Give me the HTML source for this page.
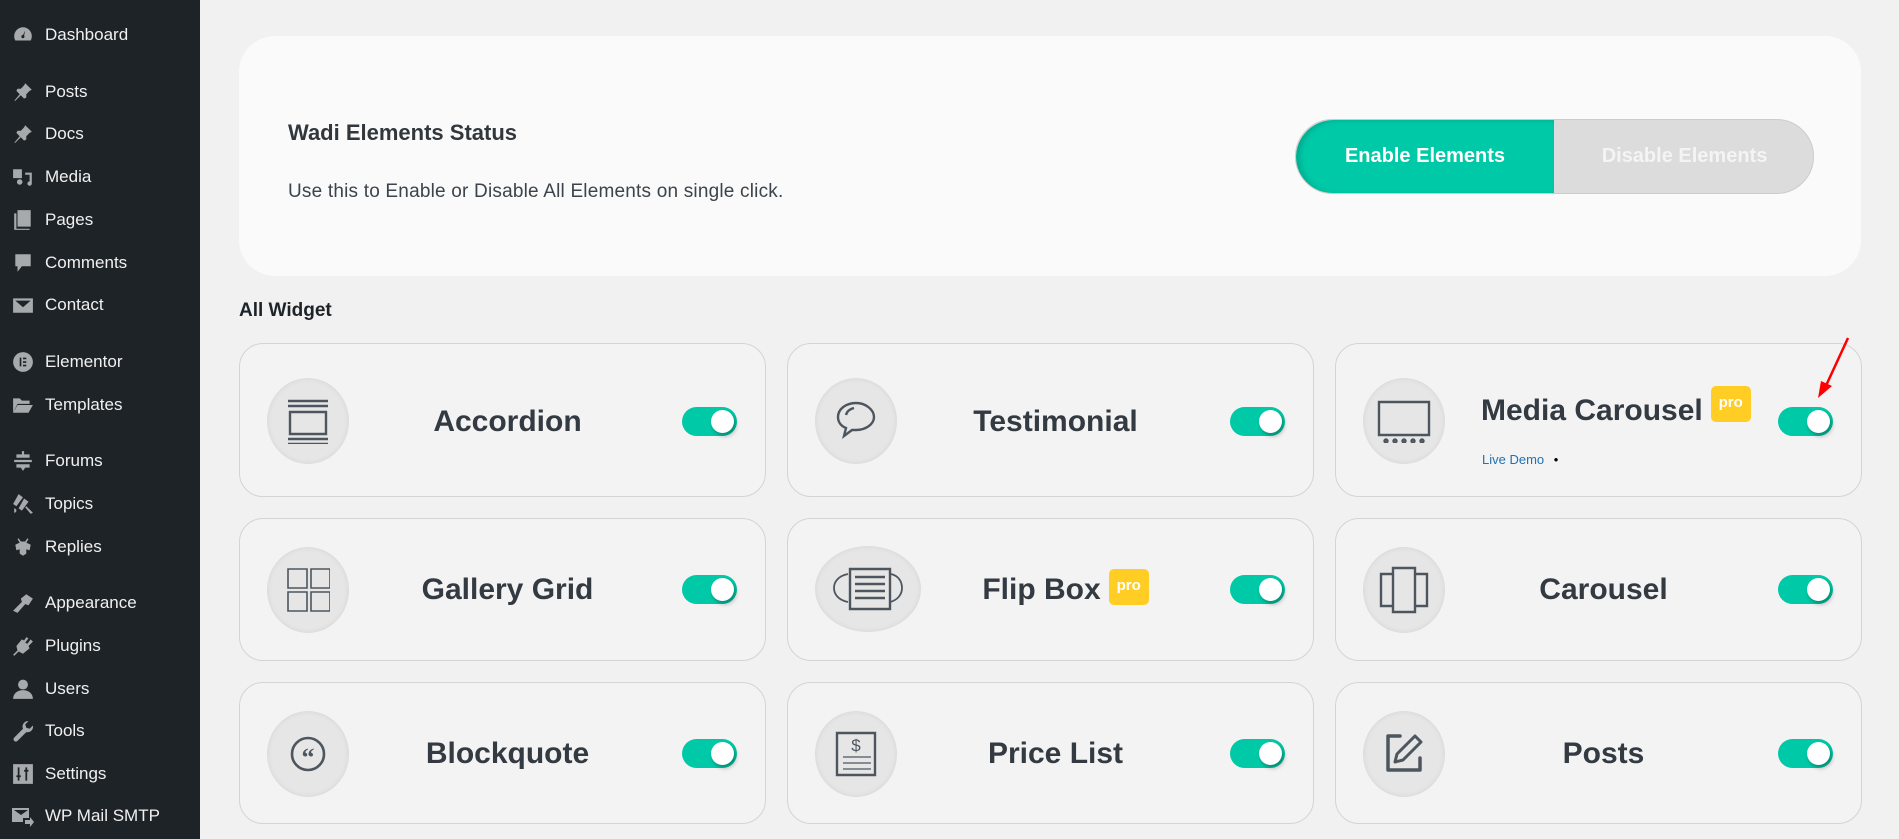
<!DOCTYPE html>
<html><head><meta charset="utf-8"><style>
*{margin:0;padding:0;box-sizing:border-box}
body{width:1899px;height:839px;overflow:hidden;background:#f1f1f1;font-family:"Liberation Sans","DejaVu Sans",sans-serif;position:relative}
#sb{position:absolute;left:0;top:0;width:200px;height:839px;background:#1d2327}
.mi{position:absolute;left:0;height:30px;width:200px;color:#f0f0f1;font-size:17px;line-height:30px}
.mi span{position:absolute;left:45px;top:0}
.mi svg{position:absolute;left:12px;top:4px;width:22px;height:22px;fill:#a7aaad}
#top{position:absolute;left:239px;top:36px;width:1622px;height:240px;background:#fafafa;border-radius:36px}
#top h2{position:absolute;left:49px;top:84px;font-size:22px;font-weight:600;color:#32373c}
#top p{position:absolute;left:49px;top:145px;font-size:19px;color:#3c434a;letter-spacing:.2px}
#btn{position:absolute;left:1295px;top:119px;width:519px;height:75px;border-radius:38px;overflow:hidden;background:#dcdcdc;border:1px solid #ccc}
#btn .en{position:absolute;left:0;top:0;width:258px;height:75px;background:#00c9a7;color:#fff;font-size:20px;font-weight:bold;text-align:center;line-height:73px;border-radius:38px 0 0 38px;box-shadow:inset 4px 0 6px rgba(0,0,0,.15)}
#btn .dis{position:absolute;left:258px;top:0;width:261px;height:75px;color:#f4f4f4;font-size:20px;font-weight:bold;text-align:center;line-height:73px}
#aw{position:absolute;left:239px;top:300px;font-size:19px;font-weight:600;color:#1d2327}
.card{position:absolute;width:527px;background:#f3f3f3;border:1px solid #d4d4d4;border-radius:24px}
.ic{position:absolute;left:27px;width:82px;height:86px;border-radius:50%;background:#e6e6e6;box-shadow:inset 0 0 6px rgba(0,0,0,.08)}
.ic svg{position:absolute;left:50%;top:50%;transform:translate(-50%,-50%);fill:none;stroke:#4d565f;stroke-width:2.4}
.tt{position:absolute;left:110px;right:100px;text-align:center;font-size:30px;font-weight:600;color:#333a42}
.tg{position:absolute;right:28px;width:55px;height:29px;border-radius:15px;background:#00c9a7}
.tg::after{content:"";position:absolute;right:3px;top:3px;width:23px;height:23px;border-radius:50%;background:#fff;box-shadow:2px 3px 4px rgba(0,0,0,.3)}
.pro{display:inline-block;background:#ffcd24;color:#fff;font-size:15px;font-weight:bold;border-radius:5px;width:40px;height:36px;line-height:34px;text-align:center;vertical-align:middle;margin-left:8px;position:relative;top:-4px}
</style></head><body>
<div id="sb">
<div class="mi" style="top:20px"><svg viewBox="0 0 20 20"><path d="M10 3a8 8 0 0 0-8 8c0 1.5.4 2.8 1 4h14c.6-1.2 1-2.5 1-4a8 8 0 0 0-8-8zm0 10a1.5 1.5 0 1 1 0-3l2-4-1 4.5A1.5 1.5 0 0 1 10 13z"/></svg><span>Dashboard</span></div>
<div class="mi" style="top:77px"><svg viewBox="0 0 20 20"><path d="M12 2l6 6-2 1-3 3 0 3-2 1-3-3-5 5-1 0 5-6-3-3 1-2 3 0 3-3z"/></svg><span>Posts</span></div>
<div class="mi" style="top:119px"><svg viewBox="0 0 20 20"><path d="M12 2l6 6-2 1-3 3 0 3-2 1-3-3-5 5-1 0 5-6-3-3 1-2 3 0 3-3z"/></svg><span>Docs</span></div>
<div class="mi" style="top:162px"><svg viewBox="0 0 20 20"><path d="M1 3h8v8H1zM12 6h6v10a2 2 0 1 1-2-2V8h-4zM7 12a2.5 2.5 0 1 1 0 5a2.5 2.5 0 0 1 0-5z"/></svg><span>Media</span></div>
<div class="mi" style="top:205px"><svg viewBox="0 0 20 20"><path d="M5 1h12v15H5zM2 4h2v14h12v1H2z"/></svg><span>Pages</span></div>
<div class="mi" style="top:248px"><svg viewBox="0 0 20 20"><path d="M3 2h14v11h-8l-4 5v-5H3z"/></svg><span>Comments</span></div>
<div class="mi" style="top:290px"><svg viewBox="0 0 20 20"><path d="M1 4h18v13H1zM3 6l7 6 7-6"/></svg><span>Contact</span></div>
<div class="mi" style="top:347px"><svg viewBox="0 0 20 20"><circle cx="10" cy="10" r="9"/><path d="M7 6h1.5v8H7zM10 6h3v1.5h-3zM10 9.3h3v1.5h-3zM10 12.5h3V14h-3z" fill="#1d2327"/></svg><span>Elementor</span></div>
<div class="mi" style="top:390px"><svg viewBox="0 0 20 20"><path d="M1 4h6l2 2h7v3H5l-4 8zM5 10h14l-4 7H1z"/></svg><span>Templates</span></div>
<div class="mi" style="top:446px"><svg viewBox="0 0 20 20"><path d="M9 1h2v3h5v3H4V4h5zM2 9h16v2H2zM4 13h12v3h-4l-2 3-2-3H4z"/></svg><span>Forums</span></div>
<div class="mi" style="top:489px"><svg viewBox="0 0 20 20"><path d="M6 1l4 3-6 8-3-2zM11 5l4 3-6 8-3-2zM13 12l6 6-2 1-5-6zM2 14a2 2 0 1 1 0 4z"/></svg><span>Topics</span></div>
<div class="mi" style="top:532px"><svg viewBox="0 0 20 20"><path d="M6 2l2 3h4l2-3 1 1-2 3 4 2-1 5-3-1v4l-3 2-3-2v-4l-3 1-1-5 4-2-2-3z"/></svg><span>Replies</span></div>
<div class="mi" style="top:588px"><svg viewBox="0 0 20 20"><path d="M13 2l6 4-4 6-3-1-7 8-4-2 8-8-1-3z"/></svg><span>Appearance</span></div>
<div class="mi" style="top:631px"><svg viewBox="0 0 20 20"><path d="M13 2l2 1-3 4 2 1 3-4 2 2-4 4 1 2-6 5-4-2-4 4-1-1 4-4-1-4 5-6 2 1z"/></svg><span>Plugins</span></div>
<div class="mi" style="top:674px"><svg viewBox="0 0 20 20"><circle cx="10" cy="6" r="4.5"/><path d="M1 19c0-5 4-8 9-8s9 3 9 8z"/></svg><span>Users</span></div>
<div class="mi" style="top:716px"><svg viewBox="0 0 20 20"><path d="M14 1a5 5 0 0 0-4 7L2 16a2 2 0 0 0 3 3l8-8a5 5 0 0 0 6-6l-3 3-3-1-1-3 3-3z"/></svg><span>Tools</span></div>
<div class="mi" style="top:759px"><svg viewBox="0 0 20 20"><path d="M1 1h18v18H1z"/><path d="M6 4v12M13 4v12M4 12h4M11 7h4" stroke="#1d2327" stroke-width="1.6"/></svg><span>Settings</span></div>
<div class="mi" style="top:801px"><svg viewBox="0 0 22 20"><path d="M0 2h17v10H11v4H0zM2 4l7 5 7-5"/><path d="M13 14h5v-3l4 5-4 5v-3h-5z"/></svg><span>WP Mail SMTP</span></div>
</div>

<div id="top"><h2>Wadi Elements Status</h2><p>Use this to Enable or Disable All Elements on single click.</p></div>
<div id="btn"><div class="en">Enable Elements</div><div class="dis">Disable Elements</div></div>
<div id="aw">All Widget</div>

<div class="card" style="left:239px;top:343px;height:154px">
<div class="ic" style="top:34px"><svg width="44" height="46" viewBox="0 0 44 46"><path d="M2 3h40M2 8h40M4 14h36v22H4zM2 41h40M2 46h40" /></svg></div>
<div class="tt" style="top:61px">Accordion</div><div class="tg" style="top:63px"></div></div>
<div class="card" style="left:787px;top:343px;height:154px">
<div class="ic" style="top:34px"><svg width="44" height="44" viewBox="0 0 44 44"><path d="M22 4C12 4 4 10 4 18c0 5 3 9 8 11l-2 8 8-6h4c10 0 18-6 18-13S32 4 22 4zM12 16c1-4 4-6 8-7"/></svg></div>
<div class="tt" style="top:61px">Testimonial</div><div class="tg" style="top:63px"></div></div>
<div class="card" style="left:1335px;top:343px;height:154px">
<div class="ic" style="top:34px"><svg width="56" height="44" viewBox="0 0 56 44"><path d="M3 3h50v33H3z"/><circle cx="10" cy="42" r="1.5"/><circle cx="19" cy="42" r="1.5"/><circle cx="28" cy="42" r="1.5"/><circle cx="37" cy="42" r="1.5"/><circle cx="46" cy="42" r="1.5"/></svg></div>
<div style="position:absolute;left:145px;top:50px;font-size:30px;font-weight:600;color:#333a42;white-space:nowrap">Media Carousel<span class="pro" style="top:-8px">pro</span></div>
<div style="position:absolute;left:146px;top:108px;font-size:13px;color:#2271b1">Live Demo <span style="color:#000;margin-left:6px">•</span></div>
<div class="tg" style="top:63px"></div></div>

<div class="card" style="left:239px;top:518px;height:143px">
<div class="ic" style="top:28px"><svg width="44" height="46" viewBox="0 0 44 46"><path d="M2 2h19v19H2zM25 2h19v19H25zM2 25h19v19H2zM25 25h19v19H25z" stroke-width="1.6"/></svg></div>
<div class="tt" style="top:54px">Gallery Grid</div><div class="tg" style="top:56px"></div></div>
<div class="card" style="left:787px;top:518px;height:143px">
<div class="ic" style="top:27px;width:106px;height:86px"><svg width="70" height="46" viewBox="0 0 70 46"><path d="M17 3h40v40H17zM22 11h30M22 18h30M22 25h30M22 32h30"/><path d="M15 8C5 10 1 16 1 22s4 12 14 14M58 8c8 2 11 8 11 14s-4 12-12 14" stroke-width="1.8"/></svg></div>
<div class="tt" style="top:54px;left:130px">Flip Box<span class="pro">pro</span></div><div class="tg" style="top:56px"></div></div>
<div class="card" style="left:1335px;top:518px;height:143px">
<div class="ic" style="top:28px"><svg width="50" height="48" viewBox="0 0 50 48"><path d="M2 8h12v32H2zM36 8h12v32H36zM14 2h22v44H14z"/></svg></div>
<div class="tt" style="top:54px">Carousel</div><div class="tg" style="top:56px"></div></div>

<div class="card" style="left:239px;top:682px;height:142px">
<div class="ic" style="top:28px"><svg width="36" height="36" viewBox="0 0 36 36"><circle cx="18" cy="18" r="16" stroke-width="2.6"/><text x="18" y="30" text-anchor="middle" font-size="26" font-weight="bold" fill="#4d565f" stroke="none" font-family="Liberation Serif,serif">“</text></svg></div>
<div class="tt" style="top:54px">Blockquote</div><div class="tg" style="top:56px"></div></div>
<div class="card" style="left:787px;top:682px;height:142px">
<div class="ic" style="top:28px"><svg width="42" height="46" viewBox="0 0 42 46"><path d="M2 2h38v42H2z"/><path d="M8 26h28M8 32h28M8 38h28" stroke-width="1.2"/><text x="21" y="20" text-anchor="middle" font-size="17" fill="#4d565f" stroke="none" font-family="Liberation Sans,sans-serif">$</text></svg></div>
<div class="tt" style="top:54px">Price List</div><div class="tg" style="top:56px"></div></div>
<div class="card" style="left:1335px;top:682px;height:142px">
<div class="ic" style="top:28px"><svg width="44" height="44" viewBox="0 0 44 44"><path d="M18 4H6v34h32V26" stroke-width="3.5" stroke-linecap="round" stroke-linejoin="round"/><path d="M33 4l6 6-18 18-8 2 2-8z" stroke-width="3" stroke-linejoin="round"/></svg></div>
<div class="tt" style="top:54px">Posts</div><div class="tg" style="top:56px"></div></div>

<svg style="position:absolute;left:1810px;top:330px" width="50" height="75" viewBox="0 0 50 75"><path d="M38 8L14 60" stroke="#f00" stroke-width="2.5"/><path d="M8 68l3-17 11 5z" fill="#f00"/></svg>
</body></html>
